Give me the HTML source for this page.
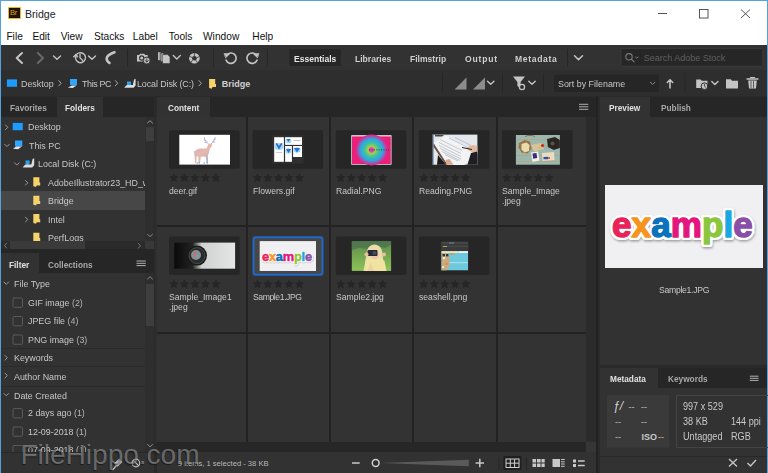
<!DOCTYPE html>
<html><head><meta charset="utf-8">
<style>
*{box-sizing:border-box;margin:0;padding:0}
html,body{width:768px;height:473px;overflow:hidden;background:#323232}
body{position:relative;font-family:"Liberation Sans",sans-serif}
.a{position:absolute}
.t{position:absolute;white-space:nowrap;line-height:12px;height:12px}
.b{font-weight:bold}
svg{position:absolute;overflow:visible}
.n{transform:scaleX(0.9);transform-origin:0 0}
.n2{transform:scaleX(0.89);transform-origin:0 0}
</style></head><body>
<!-- title + menu -->
<div class="a" style="left:0;top:0;width:768px;height:45px;background:#fff"></div>
<div class="a" style="left:0;top:0;width:768px;height:1px;background:#55a0e0"></div>
<div class="a" style="left:0;top:0;width:1px;height:473px;background:#55a0e0"></div>
<div class="a" style="left:767px;top:0;width:1px;height:473px;background:#55a0e0"></div>


<!-- title content -->
<div class="a" style="left:8px;top:6.5px;width:12.8px;height:12.3px;background:#f0b020;border-radius:1px"></div>
<div class="a" style="left:9px;top:7.5px;width:10.8px;height:10.3px;background:#1c1500"></div>
<div class="t" style="left:10px;top:6.8px;font-size:7.6px;color:#e0a020;line-height:11px;letter-spacing:-0.2px">Br</div>
<div class="t" style="left:25px;top:8px;font-size:10.6px;color:#222;letter-spacing:0px">Bridge</div>
<svg style="left:0;top:0" width="768" height="45">
<path d="M658 13.5h9" stroke="#555" stroke-width="1"/>
<rect x="699.5" y="9.5" width="8.5" height="8.5" fill="none" stroke="#555" stroke-width="1"/>
<path d="M741 9.5l9 8.5M750 9.5l-9 8.5" stroke="#555" stroke-width="1"/>
</svg>
<div class="t" style="left:6.4px;top:31.3px;font-size:10.2px;color:#111">File</div>
<div class="t" style="left:32.4px;top:31.3px;font-size:10.2px;color:#111">Edit</div>
<div class="t" style="left:60.7px;top:31.3px;font-size:10.2px;color:#111">View</div>
<div class="t" style="left:93.9px;top:31.3px;font-size:10.2px;color:#111">Stacks</div>
<div class="t" style="left:132.8px;top:31.3px;font-size:10.2px;color:#111">Label</div>
<div class="t" style="left:168.7px;top:31.3px;font-size:10.2px;color:#111">Tools</div>
<div class="t" style="left:203px;top:31.3px;font-size:10.2px;color:#111">Window</div>
<div class="t" style="left:252.3px;top:31.3px;font-size:10.2px;color:#111">Help</div>

<!-- toolbar -->
<div class="a" style="left:1px;top:45px;width:766px;height:25px;background:#323232"></div>
<!-- breadcrumb -->
<div class="a" style="left:1px;top:70px;width:766px;height:26px;background:#2e2e2e"></div>

<svg style="left:0;top:0" width="768" height="96" fill="none" stroke="#c4c4c4" stroke-width="1.5" stroke-linecap="round" stroke-linejoin="round">
<!-- nav -->
<path d="M22 53l-5.3 5 5.3 5" stroke-width="2"/>
<path d="M37.8 53l5.3 5-5.3 5" stroke="#6a6a6a" stroke-width="2"/>
<path d="M53.5 56l3.5 3.3 3.5-3.3" stroke-width="1.4"/>
<!-- clock -->
<path d="M75.5 57.7a5 5 0 1 0 1.5-3.6" stroke-width="1.4"/>
<path d="M73.5 56.5l2.5-2.6 1.7 2.7z" fill="#c4c4c4" stroke-width="1"/>
<path d="M80 53.8v4l2.6 2.6" stroke-width="1.3"/>
<path d="M88.5 56l3.5 3.3 3.5-3.3" stroke-width="1.4"/>
<!-- boomerang -->
<path d="M114.5 52.3c-4 1.5-7.5 3.5-7.8 6-.2 1.6.8 3.2 2.8 4.7" stroke-width="2.6"/>
<path d="M127.6 49.3v16.7" stroke="#262626" stroke-width="1"/>
<!-- camera -->
<path d="M137 55h2.2l1-1.3h4l1 1.3h2.5v6.6h-10.7z" fill="#c4c4c4" stroke="none"/>
<circle cx="141.7" cy="58" r="2.1" stroke="#323232" stroke-width="1.1"/>
<circle cx="146.8" cy="60.6" r="3.5" fill="#c4c4c4" stroke="#323232" stroke-width="1"/>
<path d="M146.8 58.8v3.2M145.3 60.6l1.5 1.5 1.5-1.5" stroke="#323232" stroke-width="0.9"/>
<!-- copy -->
<path d="M158 52h3v8.6h-3zM160.5 53h3v8.6h-3z" fill="#c4c4c4" stroke="#323232" stroke-width="0.6"/>
<path d="M162.7 54.6h5l2.3 2.3v6.7h-7.3z" fill="#c4c4c4" stroke="#323232" stroke-width="0.6"/>
<path d="M173.3 55.6l3.5 3.3 3.5-3.3" stroke-width="1.4"/>
<!-- aperture -->
<circle cx="194.4" cy="58.3" r="5.3" fill="#c4c4c4" stroke="none"/>
<circle cx="194.4" cy="58.3" r="2.3" fill="#323232" stroke="none"/>
<path d="M194.4 53v3M199.2 56.5l-2.6 1.4M197.4 62.6l-1.6-2.4M191 62.4l1.7-2.5M189.4 56.3l2.8 1.2" stroke="#323232" stroke-width="0.8"/>
<path d="M213.5 49.3v16.7" stroke="#262626" stroke-width="1"/>
<!-- rotate -->
<path d="M226.5 55.5a5.2 5.2 0 1 1 -0.4 4.6" stroke-width="1.6"/>
<path d="M224.5 53.6l5 .4-3.6 3.6z" fill="#c4c4c4" stroke-width="0.8"/>
<path d="M256.6 55.5a5.2 5.2 0 1 0 0.4 4.6" stroke-width="1.6"/>
<path d="M258.6 53.6l-5 .4 3.6 3.6z" fill="#c4c4c4" stroke-width="0.8"/>
<path d="M267.3 49.3v16.7" stroke="#262626" stroke-width="1"/>
<!-- workspace -->
<rect x="289.4" y="49.2" width="51.4" height="16.7" rx="1" fill="#262626" stroke="none"/>
<path d="M567.5 49.3v16.7" stroke="#262626" stroke-width="1"/>
<path d="M574.5 55.8l4 3.8 4-3.8" stroke-width="1.5"/>
<!-- search -->
<rect x="621" y="48.6" width="141.8" height="17.6" rx="1" fill="#262626" stroke="#3a3a3a" stroke-width="1"/>
<circle cx="629" cy="56.8" r="3.2" stroke="#7a7a7a" stroke-width="1.1"/>
<path d="M631.3 59.1l2.8 2.8" stroke="#7a7a7a" stroke-width="1.2"/>
<path d="M635.5 57l1.3 1.2 1.3-1.2" stroke="#7a7a7a" stroke-width="1"/>
<!-- breadcrumb -->
<rect x="6.9" y="79.4" width="10.1" height="7.4" fill="#1e9bff" stroke="none"/>
<path d="M58.8 80.6l2.4 2.6-2.4 2.6M115.3 80.6l2.4 2.6-2.4 2.6M199 80.6l2.4 2.6-2.4 2.6" stroke="#aaa" stroke-width="1"/>
<path d="M70 79h7v6h-7z" fill="#2ea6ff" stroke="none"/>
<path d="M67.8 87.6l4-2.2h5l-4.2 2.6z" fill="#e6e6e6" stroke="none"/>
<path d="M127 81.5h4v4h-4z" fill="#29a4f5" stroke="none"/>
<path d="M124.3 87.6l2.5-2.6h6l1.3-5.5 1.5-.7v6.8l-2 2.2h-9z" fill="#dcdcdc" stroke="none"/>
<path d="M209.1 78.9h6.1v5.2h0.8v3h-3.2l-0.8 0.7v0.9l-2.9-0.8z" fill="#f5d26a" stroke="none"/>
<!-- right breadcrumb tools -->
<path d="M442.5 74v18M502.5 74v18M543.5 74v18M685 74v18" stroke="#262626" stroke-width="1"/>
<defs><pattern id="chk" width="2" height="2" patternUnits="userSpaceOnUse"><rect width="1" height="1" fill="#d0d0d0"/><rect x="1" y="1" width="1" height="1" fill="#d0d0d0"/><rect x="1" y="0" width="1" height="1" fill="#303030"/><rect x="0" y="1" width="1" height="1" fill="#303030"/></pattern></defs><path d="M454.6 89.5l11.9-11.9v11.9z" fill="#8c8c8c" stroke="none"/>
<path d="M473 89.5l12-11.9v11.9z" fill="#8c8c8c" stroke="none"/>
<path d="M487.5 81.2l3.2 3 3.2-3M528.8 81.2l3.2 3 3.2-3" stroke-width="1.4"/>
<path d="M513 76.5h12l-4.4 5.5v6l-3.2-2v-4z" fill="#c4c4c4" stroke="none"/>
<circle cx="522" cy="87" r="2.6" fill="#2e2e2e" stroke="#c4c4c4" stroke-width="1.3"/>
<!-- sort box -->
<rect x="554" y="74.6" width="105" height="17.3" rx="1.5" fill="#262626" stroke="none"/>
<path d="M650.3 82.2l2.3 2.2 2.3-2.2" stroke="#888" stroke-width="1"/>
<path d="M670 80v8M667.3 82.5l2.7-2.7 2.7 2.7" stroke-width="1.6"/>
<path d="M696.2 79.5h4.5l1 1.3h5.8v7.2h-11.3z" fill="#c4c4c4" stroke="none"/>
<circle cx="704.5" cy="86.2" r="3.4" fill="#c4c4c4" stroke="#2e2e2e" stroke-width="1"/>
<path d="M704.5 84.3v2l1.3 1" stroke="#2e2e2e" stroke-width="0.8"/>
<path d="M711.8 81.4l3.1 3 3.1-3" stroke-width="1.4"/>
<path d="M726 79.2h4.8l1.2 1.5h6v7.8h-12z" fill="#c4c4c4" stroke="none"/>
<path d="M747 79h11" stroke-width="1.3"/>
<path d="M750.5 77.7h4" stroke-width="1.2"/>
<path d="M748.2 80.5h8.6l-.8 8h-7z" fill="#c4c4c4" stroke="none"/>
<path d="M751 81.5v6M753.5 81.5v6" stroke="#2e2e2e" stroke-width="0.7"/>
</svg>
<div class="t b n2" style="left:294px;top:52.9px;font-size:9.63px;color:#e6e6e6">Essentials</div>
<div class="t b n2" style="left:355px;top:52.9px;font-size:9.63px;color:#cfcfcf">Libraries</div>
<div class="t b n2" style="left:409.6px;top:52.9px;font-size:9.63px;color:#cfcfcf">Filmstrip</div>
<div class="t b n2" style="left:464.6px;top:52.9px;font-size:9.63px;color:#cfcfcf;letter-spacing:0.9px">Output</div>
<div class="t b n2" style="left:515.4px;top:52.9px;font-size:9.63px;color:#cfcfcf;letter-spacing:0.75px">Metadata</div>
<div class="t" style="left:643.8px;top:51.5px;font-size:9px;color:#5e5e5e">Search Adobe Stock</div>
<div class="t n" style="left:20.5px;top:77.60px;font-size:9.90px;color:#c8c8c8">Desktop</div>
<div class="t n" style="left:82px;top:77.60px;font-size:9.90px;color:#c8c8c8;letter-spacing:-0.4px">This PC</div>
<div class="t n" style="left:137px;letter-spacing:-0.1px;top:77.60px;font-size:9.90px;color:#c8c8c8">Local Disk (C:)</div>
<div class="t b" style="left:221.8px;top:77.5px;font-size:9px;color:#d0d0d0">Bridge</div>
<div class="t n" style="left:558px;top:77.60px;font-size:9.90px;color:#c8c8c8">Sort by Filename</div>

<!-- main bg -->
<div class="a" style="left:1px;top:96px;width:766px;height:377px;background:#2a2a2a"></div>

<!-- left panel folders -->
<div class="a" style="left:1px;top:96.5px;width:153px;height:20.5px;background:#262626"></div>
<div class="a" style="left:57px;top:96.5px;width:46px;height:20.5px;background:#323232"></div>
<div class="a" style="left:1px;top:117px;width:153px;height:133px;background:#323232"></div>
<!-- left panel filter -->
<div class="a" style="left:1px;top:253px;width:153px;height:20px;background:#262626"></div>
<div class="a" style="left:1px;top:253px;width:38px;height:20px;background:#323232"></div>
<div class="a" style="left:1px;top:273px;width:153px;height:179px;background:#323232"></div>
<div class="a" style="left:1px;top:452px;width:153px;height:21px;background:#323232"></div><div class="a" style="left:1px;top:452px;width:153px;height:1px;background:#282828"></div>


<!-- left panel content -->
<div class="t b n2" style="left:9.8px;top:101.5px;font-size:9.30px;color:#a8a8a8">Favorites</div>
<div class="t b n2" style="left:65px;top:101.5px;font-size:9.30px;color:#e2e2e2">Folders</div>
<div class="a" style="left:1px;top:190.8px;width:144px;height:18.8px;background:#474747"></div>
<div class="a" style="left:145px;top:117px;width:9px;height:124px;background:#2e2e2e"></div>
<div class="a" style="left:145.5px;top:127px;width:8px;height:14px;background:#3e3e3e"></div>
<div class="a" style="left:1px;top:241px;width:144px;height:8px;background:#2b2b2b"></div>
<div class="a" style="left:10.4px;top:241px;width:75px;height:8px;background:#3a3a3a"></div>
<div class="a" style="left:145px;top:241px;width:9px;height:8px;background:#383838"></div>
<div class="a" style="left:1px;top:249px;width:153px;height:4px;background:#262626"></div>
<svg style="left:0;top:117px" width="160" height="140" fill="none" stroke="#9a9a9a" stroke-width="1" stroke-linecap="round" stroke-linejoin="round">
<path d="M5.5 8l2.3 2.3-2.3 2.3"/>
<path d="M4.7 27.3l2.3 2.3 2.3-2.3"/>
<path d="M14.5 45.8l2.3 2.3 2.3-2.3"/>
<path d="M25.5 63.5l2.3 2.3-2.3 2.3"/>
<path d="M25.5 100.2l2.3 2.3-2.3 2.3"/>
<path d="M147.5 6l2.5-2.3 2.5 2.3"/>
<path d="M147.5 117.3l2.5 2.3 2.5-2.3" stroke="#888"/>
<path d="M6.5 126.2l-2 2.4 2 2.4M138.5 126.5l2 2.3-2 2.3" stroke="#777"/>
<rect x="12.7" y="5.9" width="10.1" height="7.3" fill="#1e9bff" stroke="none"/>
<path d="M15 23.5h7.3v6h-7.3z" fill="#2ea6ff" stroke="none"/>
<path d="M13 31.8l3.2-2.2h5.5l-3.6 2.6z" fill="#e6e6e6" stroke="none"/>
<path d="M25.5 43.5h4v4h-4z" fill="#29a4f5" stroke="none"/>
<path d="M22.8 50.2l2.5-2.6h6l1.3-5.5 1.6-.8v7l-2 2.2h-9z" fill="#dcdcdc" stroke="none"/>
<path d="M33.3 60.2h6.1v5.2h0.8v3h-3.2l-0.8 0.7v0.9l-2.9-0.8z" fill="#f5d26a" stroke="none"/>
<path d="M33.3 78.7h6.1v5.2h0.8v3h-3.2l-0.8 0.7v0.9l-2.9-0.8z" fill="#f5d26a" stroke="none"/>
<path d="M33.3 97.0h6.1v5.2h0.8v3h-3.2l-0.8 0.7v0.9l-2.9-0.8z" fill="#f5d26a" stroke="none"/>
<path d="M33.3 115.7h6.1v5.2h0.8v3h-6.9z" fill="#f5d26a" stroke="none"/>
</svg>
<div class="a" style="left:0;top:117px;width:145px;height:124px;overflow:hidden">
<div class="t n" style="left:27.9px;top:4.10px;font-size:9.90px;color:#c8c8c8">Desktop</div>
<div class="t n" style="left:28.5px;top:22.60px;font-size:9.90px;color:#c8c8c8">This PC</div>
<div class="t n" style="left:38px;top:41.10px;font-size:9.90px;color:#c8c8c8">Local Disk (C:)</div>
<div class="t n" style="left:47.9px;top:60.10px;font-size:9.90px;color:#c8c8c8">AdobeIllustrator23_HD_win</div>
<div class="t n" style="left:47.9px;top:78.10px;font-size:9.90px;color:#c8c8c8">Bridge</div>
<div class="t n" style="left:47.9px;top:96.70px;font-size:9.90px;color:#c8c8c8">Intel</div>
<div class="t n" style="left:47.9px;top:114.80px;font-size:9.90px;color:#c8c8c8">PerfLogs</div>
</div>
<!-- filter -->
<div class="t b n2" style="left:9.4px;top:258.5px;font-size:9.30px;color:#e2e2e2">Filter</div>
<div class="t b n2" style="left:48.3px;top:258.5px;font-size:9.30px;color:#a8a8a8">Collections</div>
<div class="a" style="left:0;top:250px;width:160px;height:202px;overflow:hidden"><svg style="left:0;top:0" width="160" height="223" fill="none" stroke="#9a9a9a" stroke-width="1" stroke-linecap="round" stroke-linejoin="round">
<path d="M136.5 11h9.3M136.5 13.3h9.3M136.5 15.6h9.3" stroke="#b0b0b0" stroke-linecap="butt"/>
<path d="M4 32l2.3 2.3 2.3-2.3"/>
<path d="M5 105.5l2.3 2.3-2.3 2.3"/>
<path d="M5 123.2l2.3 2.3-2.3 2.3"/>
<path d="M4 143.5l2.3 2.3 2.3-2.3"/>
<rect x="13" y="48" width="9.5" height="9.3" rx="1" stroke="#595959"/>
<rect x="13" y="66.5" width="9.5" height="9.3" rx="1" stroke="#595959"/>
<rect x="13" y="85" width="9.5" height="9.3" rx="1" stroke="#595959"/>
<rect x="13" y="158.6" width="9.5" height="9.3" rx="1" stroke="#595959"/>
<rect x="13" y="177" width="9.5" height="9.3" rx="1" stroke="#595959"/>
<rect x="13" y="195.5" width="9.5" height="9.3" rx="1" stroke="#595959"/>
</svg></div>
<div class="a" style="left:1px;top:348px;width:144px;height:1px;background:#2a2a2a"></div>
<div class="a" style="left:1px;top:366px;width:144px;height:1px;background:#2a2a2a"></div>
<div class="a" style="left:1px;top:385.5px;width:144px;height:1px;background:#2a2a2a"></div>
<div class="a" style="left:145px;top:273px;width:9px;height:179px;background:#2e2e2e"></div>
<div class="a" style="left:145.5px;top:284px;width:8px;height:41.5px;background:#3e3e3e"></div>
<svg style="left:0;top:273px" width="160" height="200" fill="none" stroke="#888" stroke-width="1" stroke-linecap="round">
<path d="M147.5 6l2.5-2.3 2.5 2.3"/>
<path d="M147.5 171.5l2.5 2.3 2.5-2.3"/>
</svg>
<div class="a" style="left:0;top:273px;width:145px;height:179px;overflow:hidden">
<div class="t n" style="left:13.5px;top:4.60px;font-size:9.90px;color:#c8c8c8">File Type</div>
<div class="t n" style="left:27.7px;top:23.60px;font-size:9.90px;color:#c8c8c8">GIF image <span style="color:#b4b4b4">(2)</span></div>
<div class="t n" style="left:27.7px;top:42.10px;font-size:9.90px;color:#c8c8c8">JPEG file <span style="color:#b4b4b4">(4)</span></div>
<div class="t n" style="left:27.7px;top:60.70px;font-size:9.90px;color:#c8c8c8">PNG image <span style="color:#b4b4b4">(3)</span></div>
<div class="t n" style="left:13.5px;top:78.80px;font-size:9.90px;color:#c8c8c8">Keywords</div>
<div class="t n" style="left:13.5px;top:97.70px;font-size:9.90px;color:#c8c8c8">Author Name</div>
<div class="t n" style="left:13.5px;top:117.10px;font-size:9.90px;color:#c8c8c8">Date Created</div>
<div class="t n" style="left:27.7px;top:134.40px;font-size:9.90px;color:#c8c8c8">2 days ago <span style="color:#b4b4b4">(1)</span></div>
<div class="t n" style="left:27.7px;top:152.80px;font-size:9.90px;color:#c8c8c8">12-09-2018 <span style="color:#b4b4b4">(1)</span></div>
<div class="t n" style="left:27.7px;top:171.10px;font-size:9.90px;color:#c8c8c8">07-09-2018 <span style="color:#b4b4b4">(1)</span></div>
</div>
<svg style="left:0;top:452px" width="160" height="21" fill="none" stroke="#c0c0c0" stroke-width="1.2" stroke-linecap="round">
<path d="M113 17.5l3-3.5" />
<path d="M115 11.5l4-4 2.5 2.5-4 4z" fill="#c0c0c0"/>
<circle cx="135.9" cy="11" r="3.8"/>
<path d="M133.3 8.4l5.2 5.2"/>
</svg>

<!-- content panel -->
<div class="a" style="left:157px;top:96.5px;width:439.4px;height:20.5px;background:#262626"></div>
<div class="a" style="left:157px;top:96.5px;width:53px;height:20.5px;background:#323232"></div>
<div class="a" style="left:157px;top:117px;width:439px;height:335px;background:#333"></div>
<div class="a" style="left:157px;top:452px;width:439px;height:21px;background:#323232"></div>


<!-- content tabs -->
<div class="t b n2" style="left:167.5px;top:101.5px;font-size:9.30px;color:#e2e2e2">Content</div>
<svg style="left:0;top:0" width="768" height="120"><path d="M579 104.3h9.3M579 106.8h9.3M579 109.3h9.3" stroke="#b0b0b0" stroke-width="1"/></svg>
<!-- grid -->
<div class="a" style="left:157px;top:117px;width:429.2px;height:325.5px;background:#333"></div>
<div class="a" style="left:245.5px;top:117px;width:2px;height:325.5px;background:#222"></div>
<div class="a" style="left:329.2px;top:117px;width:2px;height:325.5px;background:#222"></div>
<div class="a" style="left:412.3px;top:117px;width:2px;height:325.5px;background:#222"></div>
<div class="a" style="left:496.0px;top:117px;width:2px;height:325.5px;background:#222"></div>
<div class="a" style="left:157px;top:225.3px;width:429.2px;height:2px;background:#222"></div>
<div class="a" style="left:157px;top:331.7px;width:429.2px;height:2px;background:#222"></div>
<div class="a" style="left:155px;top:117px;width:2px;height:325.5px;background:#2e2e2e"></div>
<div class="a" style="left:586.2px;top:117px;width:10.2px;height:325.5px;background:#2b2b2b"></div>
<div class="a" style="left:157px;top:442.3px;width:429.2px;height:9.8px;background:#272727"></div>
<div class="a" style="left:586.2px;top:442.3px;width:10.2px;height:9.8px;background:#363636"></div>
<svg style="left:0;top:0" width="768" height="473"><rect x="169.0" y="130.3" width="70.6" height="38.5" rx="1.5" fill="#262626"/><path transform="translate(173.90,178.10) scale(4.9)" d="M0.000,-1.000 L0.294,-0.405 L0.951,-0.309 L0.476,0.155 L0.588,0.809 L0.000,0.500 L-0.588,0.809 L-0.476,0.155 L-0.951,-0.309 L-0.294,-0.405Z" fill="#262626"/><path transform="translate(184.40,178.10) scale(4.9)" d="M0.000,-1.000 L0.294,-0.405 L0.951,-0.309 L0.476,0.155 L0.588,0.809 L0.000,0.500 L-0.588,0.809 L-0.476,0.155 L-0.951,-0.309 L-0.294,-0.405Z" fill="#262626"/><path transform="translate(194.90,178.10) scale(4.9)" d="M0.000,-1.000 L0.294,-0.405 L0.951,-0.309 L0.476,0.155 L0.588,0.809 L0.000,0.500 L-0.588,0.809 L-0.476,0.155 L-0.951,-0.309 L-0.294,-0.405Z" fill="#262626"/><path transform="translate(205.40,178.10) scale(4.9)" d="M0.000,-1.000 L0.294,-0.405 L0.951,-0.309 L0.476,0.155 L0.588,0.809 L0.000,0.500 L-0.588,0.809 L-0.476,0.155 L-0.951,-0.309 L-0.294,-0.405Z" fill="#262626"/><path transform="translate(215.90,178.10) scale(4.9)" d="M0.000,-1.000 L0.294,-0.405 L0.951,-0.309 L0.476,0.155 L0.588,0.809 L0.000,0.500 L-0.588,0.809 L-0.476,0.155 L-0.951,-0.309 L-0.294,-0.405Z" fill="#262626"/><rect x="252.5" y="130.3" width="70.6" height="38.5" rx="1.5" fill="#262626"/><path transform="translate(257.40,178.10) scale(4.9)" d="M0.000,-1.000 L0.294,-0.405 L0.951,-0.309 L0.476,0.155 L0.588,0.809 L0.000,0.500 L-0.588,0.809 L-0.476,0.155 L-0.951,-0.309 L-0.294,-0.405Z" fill="#262626"/><path transform="translate(267.90,178.10) scale(4.9)" d="M0.000,-1.000 L0.294,-0.405 L0.951,-0.309 L0.476,0.155 L0.588,0.809 L0.000,0.500 L-0.588,0.809 L-0.476,0.155 L-0.951,-0.309 L-0.294,-0.405Z" fill="#262626"/><path transform="translate(278.40,178.10) scale(4.9)" d="M0.000,-1.000 L0.294,-0.405 L0.951,-0.309 L0.476,0.155 L0.588,0.809 L0.000,0.500 L-0.588,0.809 L-0.476,0.155 L-0.951,-0.309 L-0.294,-0.405Z" fill="#262626"/><path transform="translate(288.90,178.10) scale(4.9)" d="M0.000,-1.000 L0.294,-0.405 L0.951,-0.309 L0.476,0.155 L0.588,0.809 L0.000,0.500 L-0.588,0.809 L-0.476,0.155 L-0.951,-0.309 L-0.294,-0.405Z" fill="#262626"/><path transform="translate(299.40,178.10) scale(4.9)" d="M0.000,-1.000 L0.294,-0.405 L0.951,-0.309 L0.476,0.155 L0.588,0.809 L0.000,0.500 L-0.588,0.809 L-0.476,0.155 L-0.951,-0.309 L-0.294,-0.405Z" fill="#262626"/><rect x="335.8" y="130.3" width="70.6" height="38.5" rx="1.5" fill="#262626"/><path transform="translate(340.70,178.10) scale(4.9)" d="M0.000,-1.000 L0.294,-0.405 L0.951,-0.309 L0.476,0.155 L0.588,0.809 L0.000,0.500 L-0.588,0.809 L-0.476,0.155 L-0.951,-0.309 L-0.294,-0.405Z" fill="#262626"/><path transform="translate(351.20,178.10) scale(4.9)" d="M0.000,-1.000 L0.294,-0.405 L0.951,-0.309 L0.476,0.155 L0.588,0.809 L0.000,0.500 L-0.588,0.809 L-0.476,0.155 L-0.951,-0.309 L-0.294,-0.405Z" fill="#262626"/><path transform="translate(361.70,178.10) scale(4.9)" d="M0.000,-1.000 L0.294,-0.405 L0.951,-0.309 L0.476,0.155 L0.588,0.809 L0.000,0.500 L-0.588,0.809 L-0.476,0.155 L-0.951,-0.309 L-0.294,-0.405Z" fill="#262626"/><path transform="translate(372.20,178.10) scale(4.9)" d="M0.000,-1.000 L0.294,-0.405 L0.951,-0.309 L0.476,0.155 L0.588,0.809 L0.000,0.500 L-0.588,0.809 L-0.476,0.155 L-0.951,-0.309 L-0.294,-0.405Z" fill="#262626"/><path transform="translate(382.70,178.10) scale(4.9)" d="M0.000,-1.000 L0.294,-0.405 L0.951,-0.309 L0.476,0.155 L0.588,0.809 L0.000,0.500 L-0.588,0.809 L-0.476,0.155 L-0.951,-0.309 L-0.294,-0.405Z" fill="#262626"/><rect x="418.8" y="130.3" width="70.6" height="38.5" rx="1.5" fill="#262626"/><path transform="translate(423.70,178.10) scale(4.9)" d="M0.000,-1.000 L0.294,-0.405 L0.951,-0.309 L0.476,0.155 L0.588,0.809 L0.000,0.500 L-0.588,0.809 L-0.476,0.155 L-0.951,-0.309 L-0.294,-0.405Z" fill="#262626"/><path transform="translate(434.20,178.10) scale(4.9)" d="M0.000,-1.000 L0.294,-0.405 L0.951,-0.309 L0.476,0.155 L0.588,0.809 L0.000,0.500 L-0.588,0.809 L-0.476,0.155 L-0.951,-0.309 L-0.294,-0.405Z" fill="#262626"/><path transform="translate(444.70,178.10) scale(4.9)" d="M0.000,-1.000 L0.294,-0.405 L0.951,-0.309 L0.476,0.155 L0.588,0.809 L0.000,0.500 L-0.588,0.809 L-0.476,0.155 L-0.951,-0.309 L-0.294,-0.405Z" fill="#262626"/><path transform="translate(455.20,178.10) scale(4.9)" d="M0.000,-1.000 L0.294,-0.405 L0.951,-0.309 L0.476,0.155 L0.588,0.809 L0.000,0.500 L-0.588,0.809 L-0.476,0.155 L-0.951,-0.309 L-0.294,-0.405Z" fill="#262626"/><path transform="translate(465.70,178.10) scale(4.9)" d="M0.000,-1.000 L0.294,-0.405 L0.951,-0.309 L0.476,0.155 L0.588,0.809 L0.000,0.500 L-0.588,0.809 L-0.476,0.155 L-0.951,-0.309 L-0.294,-0.405Z" fill="#262626"/><rect x="502.0" y="130.3" width="70.6" height="38.5" rx="1.5" fill="#262626"/><path transform="translate(506.90,178.10) scale(4.9)" d="M0.000,-1.000 L0.294,-0.405 L0.951,-0.309 L0.476,0.155 L0.588,0.809 L0.000,0.500 L-0.588,0.809 L-0.476,0.155 L-0.951,-0.309 L-0.294,-0.405Z" fill="#262626"/><path transform="translate(517.40,178.10) scale(4.9)" d="M0.000,-1.000 L0.294,-0.405 L0.951,-0.309 L0.476,0.155 L0.588,0.809 L0.000,0.500 L-0.588,0.809 L-0.476,0.155 L-0.951,-0.309 L-0.294,-0.405Z" fill="#262626"/><path transform="translate(527.90,178.10) scale(4.9)" d="M0.000,-1.000 L0.294,-0.405 L0.951,-0.309 L0.476,0.155 L0.588,0.809 L0.000,0.500 L-0.588,0.809 L-0.476,0.155 L-0.951,-0.309 L-0.294,-0.405Z" fill="#262626"/><path transform="translate(538.40,178.10) scale(4.9)" d="M0.000,-1.000 L0.294,-0.405 L0.951,-0.309 L0.476,0.155 L0.588,0.809 L0.000,0.500 L-0.588,0.809 L-0.476,0.155 L-0.951,-0.309 L-0.294,-0.405Z" fill="#262626"/><path transform="translate(548.90,178.10) scale(4.9)" d="M0.000,-1.000 L0.294,-0.405 L0.951,-0.309 L0.476,0.155 L0.588,0.809 L0.000,0.500 L-0.588,0.809 L-0.476,0.155 L-0.951,-0.309 L-0.294,-0.405Z" fill="#262626"/><rect x="169.0" y="236.4" width="70.6" height="38.5" rx="1.5" fill="#262626"/><path transform="translate(173.90,284.20) scale(4.9)" d="M0.000,-1.000 L0.294,-0.405 L0.951,-0.309 L0.476,0.155 L0.588,0.809 L0.000,0.500 L-0.588,0.809 L-0.476,0.155 L-0.951,-0.309 L-0.294,-0.405Z" fill="#262626"/><path transform="translate(184.40,284.20) scale(4.9)" d="M0.000,-1.000 L0.294,-0.405 L0.951,-0.309 L0.476,0.155 L0.588,0.809 L0.000,0.500 L-0.588,0.809 L-0.476,0.155 L-0.951,-0.309 L-0.294,-0.405Z" fill="#262626"/><path transform="translate(194.90,284.20) scale(4.9)" d="M0.000,-1.000 L0.294,-0.405 L0.951,-0.309 L0.476,0.155 L0.588,0.809 L0.000,0.500 L-0.588,0.809 L-0.476,0.155 L-0.951,-0.309 L-0.294,-0.405Z" fill="#262626"/><path transform="translate(205.40,284.20) scale(4.9)" d="M0.000,-1.000 L0.294,-0.405 L0.951,-0.309 L0.476,0.155 L0.588,0.809 L0.000,0.500 L-0.588,0.809 L-0.476,0.155 L-0.951,-0.309 L-0.294,-0.405Z" fill="#262626"/><path transform="translate(215.90,284.20) scale(4.9)" d="M0.000,-1.000 L0.294,-0.405 L0.951,-0.309 L0.476,0.155 L0.588,0.809 L0.000,0.500 L-0.588,0.809 L-0.476,0.155 L-0.951,-0.309 L-0.294,-0.405Z" fill="#262626"/><rect x="335.8" y="236.4" width="70.6" height="38.5" rx="1.5" fill="#262626"/><path transform="translate(340.70,284.20) scale(4.9)" d="M0.000,-1.000 L0.294,-0.405 L0.951,-0.309 L0.476,0.155 L0.588,0.809 L0.000,0.500 L-0.588,0.809 L-0.476,0.155 L-0.951,-0.309 L-0.294,-0.405Z" fill="#262626"/><path transform="translate(351.20,284.20) scale(4.9)" d="M0.000,-1.000 L0.294,-0.405 L0.951,-0.309 L0.476,0.155 L0.588,0.809 L0.000,0.500 L-0.588,0.809 L-0.476,0.155 L-0.951,-0.309 L-0.294,-0.405Z" fill="#262626"/><path transform="translate(361.70,284.20) scale(4.9)" d="M0.000,-1.000 L0.294,-0.405 L0.951,-0.309 L0.476,0.155 L0.588,0.809 L0.000,0.500 L-0.588,0.809 L-0.476,0.155 L-0.951,-0.309 L-0.294,-0.405Z" fill="#262626"/><path transform="translate(372.20,284.20) scale(4.9)" d="M0.000,-1.000 L0.294,-0.405 L0.951,-0.309 L0.476,0.155 L0.588,0.809 L0.000,0.500 L-0.588,0.809 L-0.476,0.155 L-0.951,-0.309 L-0.294,-0.405Z" fill="#262626"/><path transform="translate(382.70,284.20) scale(4.9)" d="M0.000,-1.000 L0.294,-0.405 L0.951,-0.309 L0.476,0.155 L0.588,0.809 L0.000,0.500 L-0.588,0.809 L-0.476,0.155 L-0.951,-0.309 L-0.294,-0.405Z" fill="#262626"/><rect x="418.8" y="236.4" width="70.6" height="38.5" rx="1.5" fill="#262626"/><path transform="translate(423.70,284.20) scale(4.9)" d="M0.000,-1.000 L0.294,-0.405 L0.951,-0.309 L0.476,0.155 L0.588,0.809 L0.000,0.500 L-0.588,0.809 L-0.476,0.155 L-0.951,-0.309 L-0.294,-0.405Z" fill="#262626"/><path transform="translate(434.20,284.20) scale(4.9)" d="M0.000,-1.000 L0.294,-0.405 L0.951,-0.309 L0.476,0.155 L0.588,0.809 L0.000,0.500 L-0.588,0.809 L-0.476,0.155 L-0.951,-0.309 L-0.294,-0.405Z" fill="#262626"/><path transform="translate(444.70,284.20) scale(4.9)" d="M0.000,-1.000 L0.294,-0.405 L0.951,-0.309 L0.476,0.155 L0.588,0.809 L0.000,0.500 L-0.588,0.809 L-0.476,0.155 L-0.951,-0.309 L-0.294,-0.405Z" fill="#262626"/><path transform="translate(455.20,284.20) scale(4.9)" d="M0.000,-1.000 L0.294,-0.405 L0.951,-0.309 L0.476,0.155 L0.588,0.809 L0.000,0.500 L-0.588,0.809 L-0.476,0.155 L-0.951,-0.309 L-0.294,-0.405Z" fill="#262626"/><path transform="translate(465.70,284.20) scale(4.9)" d="M0.000,-1.000 L0.294,-0.405 L0.951,-0.309 L0.476,0.155 L0.588,0.809 L0.000,0.500 L-0.588,0.809 L-0.476,0.155 L-0.951,-0.309 L-0.294,-0.405Z" fill="#262626"/><rect x="253.5" y="237.3" width="69" height="37.5" rx="2" fill="#474747" stroke="#2168cc" stroke-width="2"/><path transform="translate(257.40,284.20) scale(4.9)" d="M0.000,-1.000 L0.294,-0.405 L0.951,-0.309 L0.476,0.155 L0.588,0.809 L0.000,0.500 L-0.588,0.809 L-0.476,0.155 L-0.951,-0.309 L-0.294,-0.405Z" fill="#262626"/><path transform="translate(267.90,284.20) scale(4.9)" d="M0.000,-1.000 L0.294,-0.405 L0.951,-0.309 L0.476,0.155 L0.588,0.809 L0.000,0.500 L-0.588,0.809 L-0.476,0.155 L-0.951,-0.309 L-0.294,-0.405Z" fill="#262626"/><path transform="translate(278.40,284.20) scale(4.9)" d="M0.000,-1.000 L0.294,-0.405 L0.951,-0.309 L0.476,0.155 L0.588,0.809 L0.000,0.500 L-0.588,0.809 L-0.476,0.155 L-0.951,-0.309 L-0.294,-0.405Z" fill="#262626"/><path transform="translate(288.90,284.20) scale(4.9)" d="M0.000,-1.000 L0.294,-0.405 L0.951,-0.309 L0.476,0.155 L0.588,0.809 L0.000,0.500 L-0.588,0.809 L-0.476,0.155 L-0.951,-0.309 L-0.294,-0.405Z" fill="#262626"/><path transform="translate(299.40,284.20) scale(4.9)" d="M0.000,-1.000 L0.294,-0.405 L0.951,-0.309 L0.476,0.155 L0.588,0.809 L0.000,0.500 L-0.588,0.809 L-0.476,0.155 L-0.951,-0.309 L-0.294,-0.405Z" fill="#262626"/></svg>
<div class="t n" style="left:169.0px;top:185.00px;font-size:9.57px;color:#c8c8c8">deer.gif</div>
<div class="t n" style="left:252.5px;top:185.00px;font-size:9.57px;color:#c8c8c8">Flowers.gif</div>
<div class="t n" style="left:335.8px;top:185.00px;font-size:9.57px;color:#c8c8c8">Radial.PNG</div>
<div class="t n" style="left:418.8px;top:185.00px;font-size:9.57px;color:#c8c8c8">Reading.PNG</div>
<div class="t n" style="left:502.0px;top:185.00px;font-size:9.57px;color:#c8c8c8">Sample_Image</div>
<div class="t n" style="left:502.0px;top:195.30px;font-size:9.57px;color:#c8c8c8">.jpeg</div>
<div class="t n" style="left:169.0px;top:291.10px;font-size:9.57px;color:#c8c8c8">Sample_Image1</div>
<div class="t n" style="left:169.0px;top:301.40px;font-size:9.57px;color:#c8c8c8">.jpeg</div>
<div class="t n" style="left:252.5px;top:291.10px;font-size:9.57px;color:#c8c8c8;letter-spacing:-0.45px">Sample1.JPG</div>
<div class="t n" style="left:335.8px;top:291.10px;font-size:9.57px;color:#c8c8c8">Sample2.jpg</div>
<div class="t n" style="left:418.8px;top:291.10px;font-size:9.57px;color:#c8c8c8">seashell.png</div>


<!-- thumbnails -->
<svg style="left:0;top:0" width="768" height="473">
<defs>
<linearGradient id="deerg" x1="0" y1="0" x2="1" y2="1"><stop offset="0" stop-color="#c9b0d6"/><stop offset="0.5" stop-color="#e8b9a8"/><stop offset="1" stop-color="#8fb0e0"/></linearGradient>
<radialGradient id="radg" cx="0.5" cy="0.5" r="0.5" gradientUnits="objectBoundingBox">
<stop offset="0" stop-color="#e33fb0"/><stop offset="0.14" stop-color="#d54cc0"/><stop offset="0.22" stop-color="#a8d23a"/><stop offset="0.45" stop-color="#3cc1a8"/><stop offset="0.7" stop-color="#2aa8e0"/><stop offset="0.85" stop-color="#9a5ab8"/><stop offset="1" stop-color="#ea1f7a"/></radialGradient>
<linearGradient id="s1g" x1="0" y1="0" x2="1" y2="0"><stop offset="0" stop-color="#0a0a0a"/><stop offset="0.3" stop-color="#222"/><stop offset="0.45" stop-color="#cfd2d2"/><stop offset="1" stop-color="#e4e6e4"/></linearGradient>
<linearGradient id="grass" x1="0" y1="0" x2="0" y2="1"><stop offset="0" stop-color="#5f8a5a"/><stop offset="0.4" stop-color="#6fa24e"/><stop offset="1" stop-color="#8cc25a"/></linearGradient>
</defs>
<!-- deer -->
<rect x="179.3" y="134.8" width="50.7" height="29.8" fill="#fff"/>
<g fill="url(#deerg)">
<path d="M196 150.5c1-1.5 3-2 6-2h4.5l1.5-3.5 1.5-1.5 2.5.8-.3 2.2-1.8 2-1 4-1 3 .2 7.5h-1.5l-.8-6-1.5-.5-3.5.2-.8 6.3h-1.5l-.2-6.3-1.5-.6-.5 6.9h-1.4l-.3-7.5c-.5-1-.8-3-.1-5z"/>
</g>
<g stroke="#b0a8d8" stroke-width="0.9" fill="none" stroke-linecap="round">
<path d="M208.5 144c-2-1.5-4-3-4.3-6.5M206 140.5l-1.8-.6M207 142l-2.2.5"/>
<path d="M211 144c1.8-1.8 3.8-3.5 4.2-6.5M213.5 140l1.8-.8M212.5 142l2.3 0"/>
</g>
<path d="M196.5 163h1.5M198.5 163h1.5M203.5 163h1.5M206.5 163h1.5" stroke="#6a9ae0" stroke-width="1"/>
<!-- flowers -->
<rect x="272.2" y="135.2" width="31.4" height="28.6" fill="#2f2f2f"/>
<rect x="274.2" y="137.2" width="9.7" height="24.6" fill="#fff"/>
<rect x="285.1" y="137.2" width="16.9" height="7.7" fill="#fff"/>
<rect x="285.1" y="146" width="6.8" height="15.8" fill="#fff"/>
<rect x="293.1" y="146" width="8.9" height="11" fill="#fff"/>
<ellipse cx="279" cy="146.5" rx="4.5" ry="3.5" fill="#9fd6f2"/><path d="M275.5 143.5l3.5 6 3.5-6-1.5-.5-2 3-2-3z" fill="#2a6fd0"/><ellipse cx="288.5" cy="141" rx="2.8" ry="2.2" fill="#9fd6f2"/><ellipse cx="288.5" cy="151" rx="3" ry="2.8" fill="#9fd6f2"/><ellipse cx="297" cy="150" rx="3.5" ry="2.8" fill="#9fd6f2"/>
<path d="M286.5 139l2 3 2-3z" fill="#2a6fd0"/>
<path d="M286 149l2.5 4 2.5-4z" fill="#2a6fd0"/>
<path d="M294 148l3 4.5 3-4.5z" fill="#2a6fd0"/>
<rect x="276" y="152" width="6" height="1" fill="#ccc"/><rect x="293.5" y="140" width="7" height="1" fill="#bbb"/>
<!-- radial -->
<rect x="351.3" y="135.2" width="40.2" height="29.5" fill="#eee"/>
<rect x="352" y="136.4" width="38.8" height="27.6" fill="#ea1f7a"/>
<ellipse cx="371.6" cy="149.9" rx="16" ry="15.5" fill="url(#radg)"/>
<path d="M369 149.9h20" stroke="#444" stroke-width="1" stroke-dasharray="1.2 1.2"/>
<!-- reading -->
<rect x="432.2" y="134.6" width="45.2" height="30.1" fill="#e4e7ec"/>
<rect x="432.2" y="134.6" width="1.2" height="30.1" fill="#3a4a6a"/>
<path d="M435 135h9l-2 1.5h-7z" fill="#444"/>
<path d="M433.5 143l12-7.5 31.9 15.5v3l-13 11h-17z" fill="#f3f3f5"/>
<g stroke="#a4acba" stroke-width="0.7" opacity="0.9">
<path d="M440 139.5l22 11M439 142.5l22 11M439 145.5l22 11M440 148.5l21 10.5M442 151.5l18 9M445 154.5l13 6.5M449 138l20 10M455 137.5l16 8"/>
</g>
<path d="M433.5 143l14 21.7h-2l-12-18z" fill="#6a5040"/>
<path d="M438 155l8 9.7h-9z" fill="#1a1a1a"/>
<path d="M445.5 160l4-1 4 5.7h-7z" fill="#d8a890"/>
<path d="M467 147l6-2 4.4 1v6l-3 1-6-2.5z" fill="#e0b8a0"/>
<path d="M462 147.5l10 2" stroke="#222" stroke-width="1"/>
<path d="M471 153l6.4-1.5v13.2h-10z" fill="#1e1e24"/>
<!-- sample image -->
<rect x="515.9" y="135" width="44" height="29.7" fill="#9cb8ae"/>
<g stroke="#b89f7a" stroke-width="0.9" opacity="0.8"><path d="M515.9 139.5h44M515.9 147.5h44M515.9 155.5h44M515.9 161.5h44"/></g>
<path d="M525 136.5c3-1.5 7-1.5 10 0" stroke="#6a5a48" stroke-width="0.8" fill="none"/>
<path d="M519 143l6-3 5 1.5 1.5 7.5-4 4.5-6-1-3-5z" fill="#9a7448"/>
<path d="M521.5 144l5-1.5 3 2.5-.5 6-4.5 1.5-3-3z" fill="#e8dcaa"/>
<path d="M531 145l10-2 3 6-10 2.5z" fill="#d8c49a"/>
<circle cx="542.5" cy="145.5" r="1.6" fill="#c42828"/>
<circle cx="539.5" cy="148" r="0.9" fill="#e0b020"/>
<path d="M547 139l8-2 4.9 3v8l-6 2-6-3z" fill="#2c2622"/>
<circle cx="552.5" cy="143.5" r="2" fill="#555"/>
<path d="M531 152.5l7-1 1.5 9-7 1.5z" fill="#f4f0e8"/>
<path d="M532.5 153.5l4-.5.7 5-4 .7z" fill="#3a2a80"/>
<path d="M542 153l12-1 .5 8-12 1z" fill="#eadcc0"/>
<path d="M543.5 157l4.5-.3v2.5h-4.5z" fill="#3050a0"/><circle cx="549" cy="158" r="1" fill="#c04040"/>
<!-- sample image1 -->
<rect x="174.3" y="242.6" width="60.8" height="26.1" fill="url(#s1g)"/>
<circle cx="197" cy="255.6" r="10" fill="#1a1a1a"/>
<circle cx="197" cy="255.6" r="8" fill="#2a2a2a" stroke="#555" stroke-width="0.8"/>
<circle cx="196" cy="255" r="5" fill="#8a9090"/>
<path d="M194 251l3 4-2 3z" fill="#e86070"/><path d="M195 256l4-2v4z" fill="#60a8d0"/>
<!-- sample1 -->
<rect x="259.7" y="241.1" width="56.3" height="29.9" fill="#f0f0f2"/>
<!-- sample2 -->
<rect x="351.8" y="241.1" width="39.3" height="29.8" fill="url(#grass)"/>
<path d="M351.8 241.1h39.3v4l-6 3-8-2-10 3-8-1-7.3 2z" fill="#4a6e4a" opacity="0.7"/>
<path d="M363.5 271l1.5-8 1.5-9c.5-6 3.5-9.5 8-9.5 4.5 0 7.5 3.5 8 9l1 9 3 8.5z" fill="#eadcae"/>
<ellipse cx="375" cy="254.5" rx="3.8" ry="5" fill="#ecc9a6"/>
<path d="M365.5 260l3-2 6 1.5 6-1.5 4 3 2 10h-22z" fill="#f0e2a0"/>
<path d="M370 262l4 9h-6z" fill="#e8c8a0" opacity="0.6"/>
<rect x="367.5" y="250" width="10" height="6" rx="1" fill="#2a2a36"/>
<circle cx="374.5" cy="253" r="2" fill="#4a4a5a"/>
<circle cx="366.5" cy="254.5" r="2" fill="#e8c0a0"/>
<circle cx="384" cy="254.5" r="2" fill="#e8c0a0"/>
<!-- seashell -->
<rect x="440.9" y="241.5" width="27.5" height="29.2" fill="#3a3a3a"/>
<rect x="441.5" y="242.3" width="26.5" height="1.5" fill="#4a4a4a"/>
<rect x="449" y="242.5" width="5" height="1" fill="#6a8ab0"/>
<rect x="441.5" y="245.8" width="26.5" height="1.2" fill="#4a4a4a"/>
<rect x="443" y="246" width="4" height="1" fill="#c0a060"/>
<rect x="441.5" y="251.2" width="26.5" height="19" fill="#6ccadc"/>
<rect x="441.5" y="251.2" width="17" height="1.8" fill="#efe7b8"/>
<rect x="458.5" y="251.2" width="9.5" height="1.8" fill="#f4f4f4"/>
<rect x="447" y="262" width="21" height="1.2" fill="#a8dce8"/>
<path d="M441.5 253h5l2 2 1.5 3-1 3 1 4-1.5 3-2 2.2h-5z" fill="#c9ab80"/>
<circle cx="444" cy="258" r="1.3" fill="#f0e8d8"/><circle cx="446.5" cy="264" r="1.2" fill="#e8884a"/><circle cx="443" cy="267" r="1.1" fill="#f4f0e0"/>
<path d="M450 253.5l3-.5 1 1.5-2 1z" fill="#e89050"/>
<rect x="442.5" y="254" width="2.4" height="2.4" fill="#333"/><rect x="446" y="254" width="2.4" height="2.4" fill="#334"/>
</svg>

<!-- right panel preview -->
<div class="a" style="left:599.5px;top:96.5px;width:167.5px;height:20.5px;background:#262626"></div>
<div class="a" style="left:599.5px;top:96.5px;width:50.7px;height:20.5px;background:#323232"></div>
<div class="a" style="left:599.5px;top:117px;width:167px;height:247.5px;background:#323232"></div><div class="a" style="left:596.4px;top:96px;width:1.2px;height:377px;background:#222"></div>
<!-- metadata -->
<div class="a" style="left:599.5px;top:367.5px;width:167.5px;height:20.5px;background:#262626"></div>
<div class="a" style="left:599.5px;top:367.5px;width:58.5px;height:20.5px;background:#323232"></div>
<div class="a" style="left:599.5px;top:388px;width:167px;height:68px;background:#323232"></div>
<div class="a" style="left:599.5px;top:456px;width:167px;height:17px;background:#323232"></div><div class="a" style="left:599px;top:455.5px;width:168px;height:1.2px;background:#282828"></div>


<!-- right panel content -->
<div class="t b n2" style="left:609.3px;top:101.5px;font-size:9.30px;color:#e2e2e2">Preview</div>
<div class="t b n2" style="left:660.5px;top:101.5px;font-size:9.30px;color:#a8a8a8">Publish</div>
<div class="a" style="left:605.4px;top:185.1px;width:157.4px;height:82.9px;background:#f0f0f2"></div>
<svg style="left:0;top:0" width="768" height="473">
<defs><filter id="sh" x="-10%" y="-20%" width="120%" height="150%"><feDropShadow dx="0.6" dy="1.5" stdDeviation="1.2" flood-color="#000" flood-opacity="0.35"/></filter>
<filter id="sh2" x="-10%" y="-20%" width="120%" height="150%"><feDropShadow dx="0.3" dy="0.6" stdDeviation="0.5" flood-color="#000" flood-opacity="0.3"/></filter></defs>
<text x="612" y="237.3" font-family="Liberation Sans" font-weight="bold" font-size="35" letter-spacing="0.1" stroke="#fff" stroke-width="6.2" stroke-linejoin="round" fill="#fff" filter="url(#sh)">example</text>
<text x="612" y="237.3" font-family="Liberation Sans" font-weight="bold" font-size="35" letter-spacing="0.1" stroke-width="1.4" stroke-linejoin="round"><tspan fill="#e8235a" stroke="#e8235a">e</tspan><tspan fill="#f7941d" stroke="#f7941d">x</tspan><tspan fill="#0b72bb" stroke="#0b72bb">a</tspan><tspan fill="#e3157f" stroke="#e3157f">m</tspan><tspan fill="#8cc63e" stroke="#8cc63e">p</tspan><tspan fill="#1aa7e0" stroke="#1aa7e0">l</tspan><tspan fill="#8a4fa5" stroke="#8a4fa5">e</tspan></text>
<text x="262" y="261.3" font-family="Liberation Sans" font-weight="bold" font-size="12.8" letter-spacing="-0.2" stroke="#fff" stroke-width="2.4" stroke-linejoin="round" fill="#fff" filter="url(#sh2)">example</text>
<text x="262" y="261.3" font-family="Liberation Sans" font-weight="bold" font-size="12.8" letter-spacing="-0.2" stroke-width="0.5" stroke-linejoin="round"><tspan fill="#e8235a" stroke="#e8235a">e</tspan><tspan fill="#f7941d" stroke="#f7941d">x</tspan><tspan fill="#0b72bb" stroke="#0b72bb">a</tspan><tspan fill="#e3157f" stroke="#e3157f">m</tspan><tspan fill="#8cc63e" stroke="#8cc63e">p</tspan><tspan fill="#1aa7e0" stroke="#1aa7e0">l</tspan><tspan fill="#8a4fa5" stroke="#8a4fa5">e</tspan></text>
<path d="M749.8 376.2h8.7M749.8 378.3h8.7M749.8 380.4h8.7" stroke="#b0b0b0" stroke-width="1"/>
<rect x="607" y="395" width="62.3" height="52.8" fill="#3a3a3a"/>
<rect x="676.5" y="395.5" width="95" height="52" fill="none" stroke="#444" stroke-width="1"/>
<path d="M729 459l8 7.5M737 459l-8 7.5" stroke="#c8c8c8" stroke-width="1.3"/>
<path d="M747.5 463l3 3 5.5-6" stroke="#c8c8c8" stroke-width="1.4" fill="none"/>
</svg>
<div class="t n" style="left:659px;top:283.60px;font-size:9.57px;color:#c8c8c8;letter-spacing:-0.3px">Sample1.JPG</div>
<div class="t b n2" style="left:609.5px;top:372.5px;font-size:9.30px;color:#e2e2e2">Metadata</div>
<div class="t b n2" style="left:668px;top:372.5px;font-size:9.30px;color:#a8a8a8">Keywords</div>
<div class="t" style="left:613px;top:400px;font-size:12px;font-style:italic;color:#d0d0d0">&#402;/</div>
<div class="t" style="left:628.5px;top:401px;font-size:9px;color:#c0c0c0">--</div>
<div class="t" style="left:641px;top:401px;font-size:9px;color:#c0c0c0">--</div>
<div class="t" style="left:615px;top:416px;font-size:9px;color:#c0c0c0">--</div>
<div class="t" style="left:641px;top:416px;font-size:9px;color:#c0c0c0">--</div>
<div class="t" style="left:615px;top:431.3px;font-size:9px;color:#c0c0c0">--</div>
<div class="t b" style="left:641.6px;top:431.3px;font-size:9px;color:#c8c8c8">ISO<span style="font-weight:normal;margin-left:1px">--</span></div>
<div class="t n" style="left:683px;top:400.70px;font-size:10.12px;color:#c8c8c8">997 x 529</div>
<div class="t n" style="left:683px;top:415.90px;font-size:10.12px;color:#c8c8c8">38 KB</div>
<div class="t n" style="left:730.6px;top:415.90px;font-size:10.12px;color:#c8c8c8">144 ppi</div>
<div class="t n" style="left:683px;top:431.40px;font-size:10.12px;color:#c8c8c8">Untagged</div>
<div class="t n" style="left:730.6px;top:431.40px;font-size:10.12px;color:#c8c8c8">RGB</div>
<!-- status bar -->
<div class="t" style="left:177.8px;top:457.8px;font-size:7.6px;color:#b8b8b8">9 items, 1 selected - 38 KB</div>
<svg style="left:0;top:0" width="768" height="473" fill="none" stroke="#c8c8c8" stroke-linecap="butt">
<path d="M352 463h7.7" stroke-width="1.5"/>
<path d="M380 463l88.8-3.3v6.6z" fill="#5a5a5a" stroke="none"/>
<circle cx="375.7" cy="463" r="3.4" fill="#2e2e2e" stroke="#d0d0d0" stroke-width="1.5"/>
<path d="M475.6 463h8.4M479.8 458.8v8.4" stroke-width="1.5"/>
<path d="M499 457v13M526.4 457v13" stroke="#262626" stroke-width="1"/>
<rect x="503.4" y="456" width="18" height="14" fill="#1f1f1f" stroke="none"/>
<rect x="506" y="459" width="13" height="8.5" stroke="#d0d0d0" stroke-width="1"/>
<path d="M510.3 459v8.5M514.6 459v8.5M506 463.2h13" stroke="#d0d0d0" stroke-width="1"/>
<path d="M532.5 459h3.6v3.6h-3.6zM537 459h3.6v3.6h-3.6zM541.5 459h3.2v3.6h-3.2zM532.5 463.4h3.6v3.6h-3.6zM537 463.4h3.6v3.6h-3.6zM541.5 463.4h3.2v3.6h-3.2z" fill="#c8c8c8" stroke="none"/>
<path d="M552.5 459h7.5v8h-7.5z" fill="#c8c8c8" stroke="none"/>
<path d="M561 459.5h3.7M561 461.8h3.7M561 464h3.7M561 466.3h3.7" stroke-width="1"/>
<path d="M573 459.5h3v3h-3zM573 464h3v3h-3z" fill="#c8c8c8" stroke="none"/>
<path d="M578 461h6.7M578 465.5h6.7" stroke-width="1.6"/>
</svg>


<!-- watermark -->
<div class="t" style="left:20.5px;top:438px;height:34px;line-height:34px;font-size:28px;color:rgba(200,200,200,0.45);text-shadow:-0.6px 0.6px 0.8px rgba(0,0,0,0.5)">FileHippo.com</div>

</body></html>
